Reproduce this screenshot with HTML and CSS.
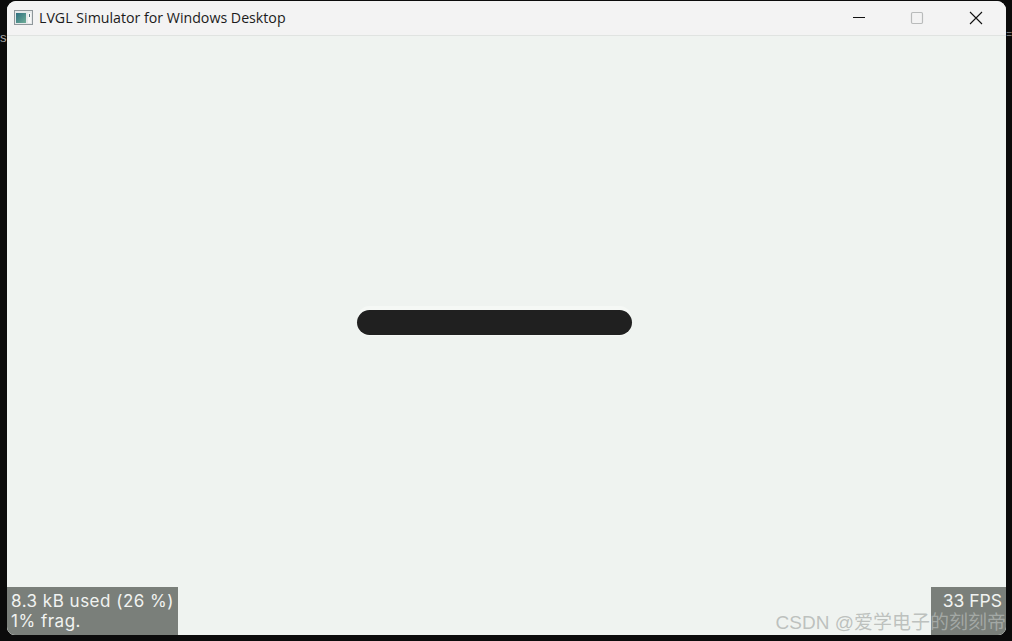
FILE: index.html
```html
<!DOCTYPE html>
<html lang="en">
<head>
<meta charset="utf-8">
<title>LVGL Simulator for Windows Desktop</title>
<link rel="stylesheet" href="styles.css">
</head>
<body>
<div class="desk">
  <span class="stray-left">s</span>
  <span class="stray-right">=</span>
  <main class="window">
    <header class="titlebar">
      <svg class="app-icon" width="19" height="15" viewBox="0 0 19 15">
        <defs>
          <linearGradient id="ic" x1="0" y1="0" x2="1" y2="1">
            <stop offset="0" stop-color="#2f6f80"/>
            <stop offset="1" stop-color="#6fae98"/>
          </linearGradient>
        </defs>
        <rect x="0.5" y="0.5" width="18" height="14" fill="#e6e9ea" stroke="#8f979b"/>
        <rect x="2" y="3" width="10" height="10" fill="url(#ic)"/>
        <rect x="14" y="3" width="3" height="10" fill="#f7f8f8"/>
        <rect x="15" y="4" width="1" height="3" fill="#55757f"/>
      </svg>
      <span class="title">LVGL Simulator for Windows Desktop</span>
      <div class="controls">
        <span class="ctl">
          <svg width="14" height="14" viewBox="0 0 14 14"><path d="M1 6.5H13" stroke="#111" stroke-width="1.1" fill="none"/></svg>
        </span>
        <span class="ctl">
          <svg width="14" height="14" viewBox="0 0 14 14"><rect x="1.5" y="1.5" width="11" height="11" rx="1.2" stroke="#b9bbbb" stroke-width="1.2" fill="none"/></svg>
        </span>
        <span class="ctl">
          <svg width="14" height="14" viewBox="0 0 14 14"><path d="M1 1L13 13M13 1L1 13" stroke="#111" stroke-width="1.1" fill="none"/></svg>
        </span>
      </div>
    </header>
    <section class="canvas">
      <div class="bar"></div>
      <div class="stat stat-mem">8.3 kB used (26 %)<br>1% frag.</div>
      <div class="stat stat-fps">33 FPS</div>
      <div class="mark">CSDN @爱学电子的刻刻帝</div>
    </section>
  </main>
</div>
</body>
</html>
```

FILE: styles.css
```css
* { box-sizing: border-box; }
html, body { margin: 0; height: 100%; }
body { background: #0b0b0b; overflow: hidden; }

.desk {
  position: relative;
  width: 1012px;
  height: 641px;
  padding: 1px 6px 6px 7px;
}
.stray-left, .stray-right {
  position: absolute;
  font-family: "Liberation Sans", sans-serif;
  color: #a8a8a8;
}
.stray-left { left: 0; top: 30px; font-size: 13px; }
.stray-right { right: 0; top: 29px; font-size: 10px; color: #777; }

.window {
  position: relative;
  display: flex;
  flex-direction: column;
  height: 100%;
  border-radius: 9px 9px 8px 8px;
  overflow: hidden;
  background: #eff3f0;
}

.titlebar {
  display: flex;
  align-items: center;
  flex: 0 0 35px;
  padding-left: 7px;
  background: #f3f3f3;
  border-bottom: 1px solid #e0e3e1;
}
.app-icon { flex: none; margin-right: 6px; margin-bottom: 2px; }
.title {
  margin-bottom: 2px;
  font: 14.2px "Open Sans", "Noto Sans", sans-serif;
  color: #1b1b1b;
  white-space: nowrap;
}
.controls {
  display: flex;
  margin-left: auto;
  margin-right: 1px;
}
.ctl {
  display: flex;
  align-items: center;
  justify-content: center;
  width: 58.5px;
  height: 34px;
}

.canvas {
  position: relative;
  flex: 1;
  display: flex;
  align-items: center;
  justify-content: center;
  background: #eff3f0;
}
.bar {
  width: 275px;
  height: 25px;
  margin-right: 24px;
  margin-bottom: 26px;
  border-radius: 12.5px;
  background: #202020;
  box-shadow: 0 -5px 0 -1px #f5f8f5, 0 1px 0 0 #f5f8f5;
}

.stat {
  position: absolute;
  bottom: 0;
  height: 48px;
  padding: 4px 4px 0;
  background: #7a7f7a;
  color: #f1f3f1;
  font: 17.5px/20px "Inter", "Open Sans", sans-serif;
  white-space: nowrap;
}
.stat-mem { left: 0; width: 171px; font-size: 17px; letter-spacing: 0.5px; }
.stat-fps { right: 0; width: 75px; text-align: right; }

.mark {
  position: absolute;
  right: 0;
  bottom: 1px;
  font: 19px/22px "Liberation Sans", "Noto Sans CJK SC", sans-serif;
  color: rgba(175, 180, 177, 0.8);
  white-space: nowrap;
}
```
